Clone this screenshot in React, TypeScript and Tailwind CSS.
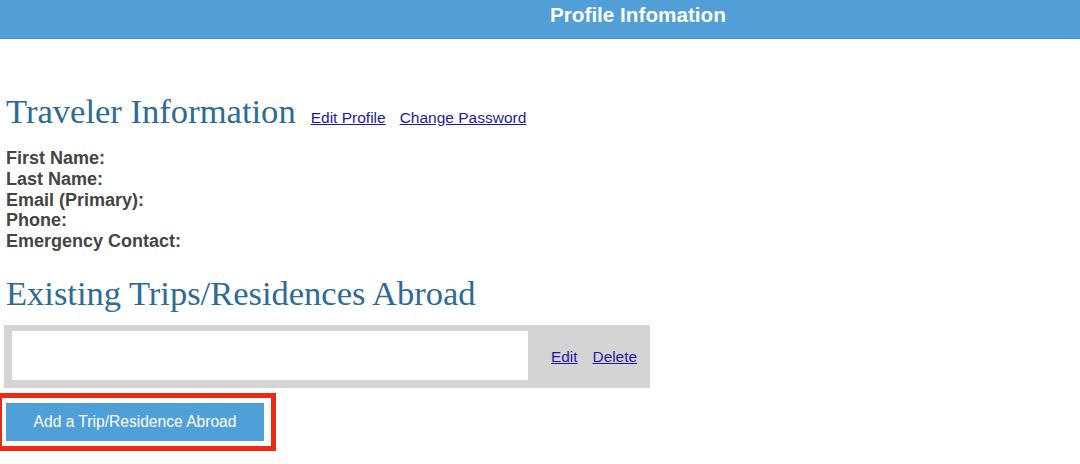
import React from "react";

const sans = { fontFamily: '"Liberation Sans", Arial, sans-serif' };
const serif = { fontFamily: '"Liberation Serif", "Times New Roman", serif' };

export default function App() {
  return (
    <div className="w-[1080px] h-[464px] bg-white overflow-hidden" style={sans}>
      <div className="h-[39px] bg-[#519fd6] border-b border-[#4a8dbf] pl-[550px] pt-[3px]">
        <span className="text-[20.7px] font-bold text-white leading-[24px]">Profile Infomation</span>
      </div>
      <div className="px-[6px]">
        <div className="mt-[52px] flex items-baseline">
          <h1 className="text-[34.6px] leading-[40px] text-[#2d6b94] font-normal" style={serif}>
            Traveler Information
          </h1>
          <a href="#" className="ml-[15px] text-[15.5px] text-[#1d1aa6] underline">Edit Profile</a>
          <a href="#" className="ml-[14px] text-[15.5px] text-[#1d1aa6] underline">Change Password</a>
        </div>
        <div className="mt-[17px] text-[18px] leading-[20.75px] font-bold text-[#444444]">
          <div>First Name:</div>
          <div>Last Name:</div>
          <div>Email (Primary):</div>
          <div>Phone:</div>
          <div>Emergency Contact:</div>
        </div>
        <h2 className="mt-[21px] text-[34.5px] leading-[40px] text-[#2d6b94] font-normal" style={serif}>
          Existing Trips/Residences Abroad
        </h2>
        <div className="mt-[12px] ml-[-2px] w-[646px] h-[63px] bg-[#d4d4d4] flex items-center">
          <div className="ml-[8px] mt-[-1px] w-[516px] h-[49px] bg-white" />
          <a href="#" className="ml-[23px] text-[15.4px] text-[#1d1aa6] underline">Edit</a>
          <a href="#" className="ml-[15px] text-[15.4px] text-[#1d1aa6] underline">Delete</a>
        </div>
        <div className="mt-[5px] ml-[-9px] w-fit border-[5px] border-[#ee2a12] pl-[4px] pr-[7px] py-[5px]">
          <button className="w-[258px] h-[38px] bg-[#4f9fd8] text-white text-[15.6px] flex items-center justify-center">
            Add a Trip/Residence Abroad
          </button>
        </div>
      </div>
    </div>
  );
}
